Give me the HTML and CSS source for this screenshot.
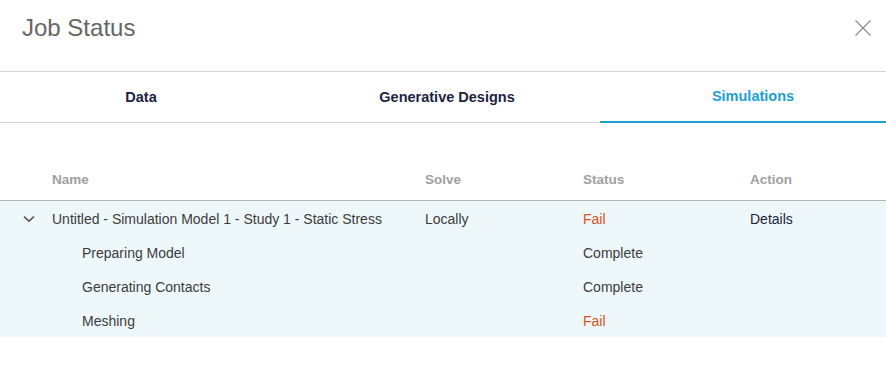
FILE: index.html
```html
<!DOCTYPE html>
<html>
<head>
<meta charset="utf-8">
<link rel="stylesheet" href="styles.css">
</head>
<body>
<div class="dialog">
  <header class="head">
    <h1 class="title">Job Status</h1>
    <button class="close" aria-label="Close">
      <svg width="16" height="16" viewBox="0 0 16 16"><path d="M0.5 0.5L15.5 15.5M15.5 0.5L0.5 15.5" stroke="#8a8a8a" stroke-width="1.2" fill="none"/></svg>
    </button>
  </header>
  <nav class="tabs">
    <div class="tab t1">Data</div>
    <div class="tab t2">Generative Designs</div>
    <div class="tab t3 active">Simulations</div>
  </nav>
  <div class="table">
    <div class="row thead">
      <div class="c-name">Name</div>
      <div class="c-solve">Solve</div>
      <div class="c-status">Status</div>
      <div class="c-action">Action</div>
    </div>
    <div class="body">
      <div class="row">
        <div class="c-chev"><svg width="12" height="8" viewBox="0 0 12 8"><path d="M1 1.5L6 6.2L11 1.5" stroke="#555" stroke-width="1.6" fill="none"/></svg></div>
        <div class="c-name">Untitled - Simulation Model 1 - Study 1 - Static Stress</div>
        <div class="c-solve">Locally</div>
        <div class="c-status fail">Fail</div>
        <div class="c-action link">Details</div>
      </div>
      <div class="row sub">
        <div class="c-name">Preparing Model</div>
        <div class="c-solve"></div>
        <div class="c-status">Complete</div>
        <div class="c-action"></div>
      </div>
      <div class="row sub">
        <div class="c-name">Generating Contacts</div>
        <div class="c-solve"></div>
        <div class="c-status">Complete</div>
        <div class="c-action"></div>
      </div>
      <div class="row sub">
        <div class="c-name">Meshing</div>
        <div class="c-solve"></div>
        <div class="c-status fail">Fail</div>
        <div class="c-action"></div>
      </div>
    </div>
  </div>
</div>
</body>
</html>
```
FILE: styles.css
```css
* { box-sizing: border-box; }
html, body { margin: 0; padding: 0; background: #fff; }
body { font-family: "Liberation Sans", Arial, sans-serif; color: #3c3c3c; width: 886px; height: 392px; overflow: hidden; }

.head {
  height: 72px;
  display: flex;
  align-items: flex-start;
  justify-content: space-between;
  border-bottom: 1px solid #d4d4d4;
  padding: 14px 15px 0 22px;
}
.title {
  margin: 0;
  font-weight: normal;
  font-size: 24px;
  line-height: 28px;
  color: #666;
}
.close {
  border: 0;
  background: none;
  padding: 0;
  margin-top: 6px;
  width: 16px;
  height: 16px;
}
.close svg { display: block; }

.tabs {
  display: grid;
  grid-template-columns: 282px 318px 1fr;
  height: 51px;
  border-bottom: 1px solid #d4d4d4;
}
.tab {
  display: flex;
  align-items: center;
  justify-content: center;
  font-size: 14.5px;
  font-weight: bold;
  color: #1c2340;
  padding-bottom: 1px;
}
.t2 { padding-left: 12px; }
.t3 { padding-left: 20px; }
.tab.active {
  color: #1a9fd6;
  border-bottom: 2px solid #1a9fd6;
  margin-bottom: -1px;
}

.table { margin-top: 38px; }
.row {
  display: grid;
  grid-template-columns: 52px 373px 158px 167px 1fr;
  height: 34px;
  align-items: center;
  font-size: 14px;
  padding-top: 2px;
}
.row > .c-name:first-child { grid-column: 2; }
.thead {
  height: 40px;
  border-bottom: 1px solid #b4b4b4;
  font-size: 13.5px;
  font-weight: bold;
  color: #a0a0a0;
  padding-top: 0;
  padding-bottom: 3px;
}
.body { background: #eef7fa; }
.c-chev { display: flex; justify-content: flex-start; padding-left: 23px; padding-top: 0; }
.c-chev svg { display: block; }
.sub .c-name { padding-left: 30px; }
.fail { color: #d9541e; }
.link { color: #1c2340; }
```
